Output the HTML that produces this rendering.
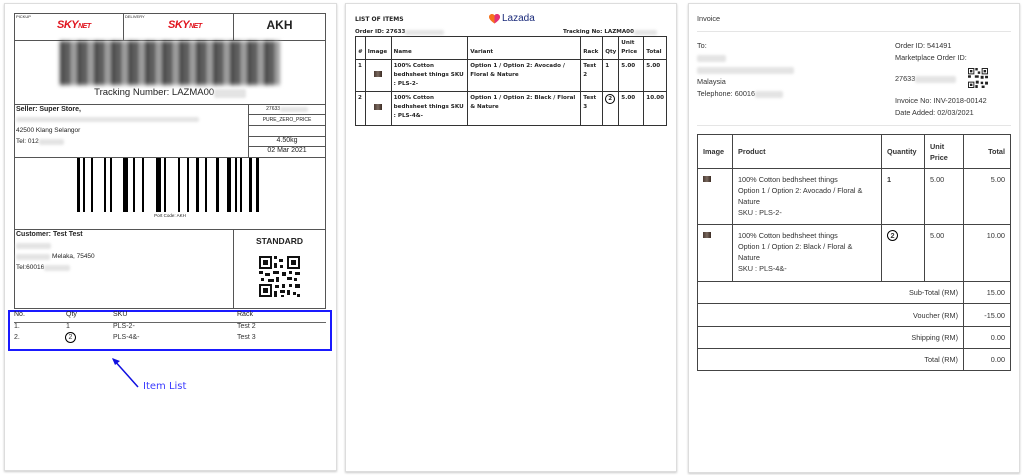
<!DOCTYPE html>
<html><head><meta charset="utf-8"><style>
*{margin:0;padding:0;box-sizing:border-box}
body{width:1024px;height:475px;background:#fff;position:relative;overflow:hidden;font-family:"Liberation Sans",Arial,sans-serif;color:#222}
.a{position:absolute}
.panel{position:absolute;border:1px solid #ddd;box-shadow:0 1px 2px #ccc;background:#fff}
.bx{position:absolute;border:1px solid #555}
.bl{color:transparent;background:#e4e4e4;filter:blur(1.2px);border-radius:2px;display:inline-block;line-height:0.9em}
.t7{font-size:7px}
table{border-collapse:collapse}
#mt td,#mt th{border:1px solid #333;font-size:5.6px;font-family:"DejaVu Sans",sans-serif;font-weight:bold;vertical-align:top;padding:2px;text-align:left;line-height:9px;color:#222}
#mt th{vertical-align:bottom}
#it td,#it th{border:1px solid #444;font-size:7.3px;vertical-align:top;padding:5px;text-align:left;color:#333;line-height:11px;font-weight:normal}
#it th{vertical-align:middle;font-weight:bold}
.thumb{display:inline-block;width:8px;height:6px;background:linear-gradient(90deg,#4a3a32,#7a6a60,#3a2a22)}
.circ{display:inline-block;border:1px solid #000;border-radius:50%;width:11px;height:11px;text-align:center;line-height:10px}
</style></head><body>

<!-- LEFT PANEL -->
<div class="panel" style="left:4px;top:3px;width:333px;height:468px"></div>
<div class="bx" style="left:14px;top:13px;width:312px;height:296px"></div>
<div class="a" style="left:14px;top:40px;width:312px;border-top:1px solid #555"></div>
<div class="a" style="left:123px;top:13px;height:27px;border-left:1px solid #555"></div>
<div class="a" style="left:233px;top:13px;height:27px;border-left:1px solid #555"></div>
<div class="a" style="left:16px;top:14px;font-size:4px">PICKUP</div>
<div class="a" style="left:125px;top:14px;font-size:4px">DELIVERY</div>
<div class="a" style="left:57px;top:19px;color:#e0141e;font-weight:bold;font-style:italic;font-size:11px;letter-spacing:-0.5px">SKY<span style="font-size:7px">NET</span></div>
<div class="a" style="left:168px;top:19px;color:#e0141e;font-weight:bold;font-style:italic;font-size:11px;letter-spacing:-0.5px">SKY<span style="font-size:7px">NET</span></div>
<div class="a" style="left:233px;top:18px;width:93px;text-align:center;font-size:12px;font-weight:bold">AKH</div>
<div class="a" style="left:60px;top:41px;width:220px;height:44px;background:repeating-linear-gradient(90deg,#333 0 5px,#aaa 5px 7px,#222 7px 10px,#ccc 10px 13px,#555 13px 15px,#eee 15px 17px);filter:blur(2px)"></div>
<div class="a" style="left:14px;top:87px;width:312px;text-align:center;font-size:9.5px">Tracking Number: LAZMA00<span class="bl">467752</span></div>
<div class="a" style="left:14px;top:104px;width:312px;border-top:1px solid #555"></div>
<div class="a" style="left:248px;top:104px;height:53px;border-left:1px solid #555"></div>
<div class="a" style="left:248px;top:114px;width:78px;border-top:1px solid #555"></div>
<div class="a" style="left:248px;top:125px;width:78px;border-top:1px solid #555"></div>
<div class="a" style="left:248px;top:136px;width:78px;border-top:1px solid #555"></div>
<div class="a" style="left:248px;top:146px;width:78px;border-top:1px solid #555"></div>
<div class="a" style="left:248px;top:106px;width:78px;text-align:center;font-size:5px">27633<span class="bl">0000000000</span></div>
<div class="a" style="left:248px;top:117px;width:78px;text-align:center;font-size:5px">PURE_ZERO_PRICE</div>
<div class="a" style="left:248px;top:137px;width:78px;text-align:center;font-size:7px">4.50kg</div>
<div class="a" style="left:248px;top:147px;width:78px;text-align:center;font-size:7px">02 Mar 2021</div>
<div class="a t7" style="left:16px;top:106px;font-weight:bold">Seller: Super Store,</div>
<div class="a" style="left:16px;top:116px;font-size:6px"><span class="bl">Kawasan Perusahaan Batu 5, Jalan  Banting, Telok Panglima Garang</span></div>
<div class="a" style="left:16px;top:127px;font-size:6.5px">42500 Klang Selangor</div>
<div class="a" style="left:16px;top:138px;font-size:6.5px">Tel: 012<span class="bl">7335333</span></div>
<div class="a" style="left:14px;top:157px;width:312px;border-top:1px solid #555"></div>
<div class="a" style="left:77px;top:158px;width:186px;height:54px;background:linear-gradient(90deg,#000 0 3px,#fff 3px 6px,#000 6px 8px,#fff 8px 14px,#000 14px 16px,#fff 16px 27px,#000 27px 29px,#fff 29px 33px,#000 33px 35px,#fff 35px 46px,#000 46px 51px,#fff 51px 56px,#000 56px 58px,#fff 58px 65px,#000 65px 67px,#fff 67px 79px,#000 79px 84px,#fff 84px 87px,#000 87px 89px,#fff 89px 101px,#000 101px 103px,#fff 103px 110px,#000 110px 112px,#fff 112px 119px,#000 119px 122px,#fff 122px 128px,#000 128px 130px,#fff 130px 139px,#000 139px 142px,#fff 142px 150px,#000 150px 154px,#fff 154px 158px,#000 158px 160px,#fff 160px 163px,#000 163px 165px,#fff 165px 172px,#000 172px 175px,#fff 175px 179px,#000 179px 182px,#fff 182px 186px)"></div>
<div class="a" style="left:14px;top:213px;width:312px;text-align:center;font-size:4.5px">Port Code: AKH</div>
<div class="a" style="left:14px;top:229px;width:312px;border-top:1px solid #555"></div>
<div class="a" style="left:233px;top:229px;height:80px;border-left:1px solid #555"></div>
<div class="a t7" style="left:16px;top:231px;font-weight:bold">Customer: Test Test</div>
<div class="a" style="left:16px;top:242px;font-size:6.5px"><span class="bl">3, Lorong 5,</span></div>
<div class="a" style="left:16px;top:253px;font-size:6.5px"><span class="bl">Ayer Keroh,</span> Melaka, 75450</div>
<div class="a" style="left:16px;top:264px;font-size:6.5px">Tel:60016<span class="bl">3746369</span></div>
<div class="a" style="left:233px;top:236px;width:93px;text-align:center;font-size:8.5px;font-weight:bold">STANDARD</div>
<svg class="a" style="left:259px;top:256px" width="41" height="41" viewBox="0 0 41 41"><g fill="#111"><path d="M0 0h13v13H0zM2 2v9h9V2zM4 4h5v5H4z" fill-rule="evenodd"/><path d="M28 0h13v13H28zM30 2v9h9V2zM32 4h5v5h-5z" fill-rule="evenodd"/><path d="M0 28h13v13H0zM2 30v9h9v-9zM4 32h5v5H4z" fill-rule="evenodd"/><rect x="15" y="0" width="3" height="3"/><rect x="20" y="3" width="4" height="3"/><rect x="15" y="7" width="3" height="5"/><rect x="21" y="9" width="3" height="3"/><rect x="0" y="15" width="4" height="3"/><rect x="6" y="17" width="5" height="3"/><rect x="14" y="15" width="6" height="3"/><rect x="23" y="16" width="4" height="4"/><rect x="30" y="15" width="3" height="3"/><rect x="36" y="16" width="5" height="3"/><rect x="2" y="22" width="3" height="3"/><rect x="9" y="23" width="6" height="3"/><rect x="17" y="21" width="3" height="5"/><rect x="28" y="21" width="5" height="3"/><rect x="35" y="22" width="3" height="3"/><rect x="16" y="29" width="4" height="3"/><rect x="23" y="28" width="3" height="4"/><rect x="30" y="28" width="3" height="3"/><rect x="36" y="28" width="5" height="4"/><rect x="15" y="35" width="3" height="6"/><rect x="21" y="34" width="5" height="3"/><rect x="28" y="34" width="3" height="5"/><rect x="34" y="36" width="3" height="3"/><rect x="38" y="38" width="3" height="3"/><rect x="22" y="39" width="3" height="2"/></g></svg>
<!-- item list -->
<div class="a" style="left:8px;top:310px;width:324px;height:41px;border:2px solid #1a1aff"></div>
<div class="a" style="left:14px;top:322px;width:312px;border-top:1px solid #666"></div>
<div class="a" style="left:14px;top:311px;font-size:7px">No.</div>
<div class="a" style="left:66px;top:311px;font-size:7px">Qty</div>
<div class="a" style="left:113px;top:311px;font-size:7px">SKU</div>
<div class="a" style="left:237px;top:311px;font-size:7px">Rack</div>
<div class="a" style="left:14px;top:323px;font-size:7px;color:#333">1.</div>
<div class="a" style="left:66px;top:323px;font-size:7px;color:#333">1</div>
<div class="a" style="left:113px;top:323px;font-size:7px;color:#333">PLS-2-</div>
<div class="a" style="left:237px;top:323px;font-size:7px;color:#333">Test 2</div>
<div class="a" style="left:14px;top:334px;font-size:7px;color:#333">2.</div>
<div class="a" style="left:65px;top:332px;font-size:7px;color:#333"><span class="circ">2</span></div>
<div class="a" style="left:113px;top:334px;font-size:7px;color:#333">PLS-4&amp;-</div>
<div class="a" style="left:237px;top:334px;font-size:7px;color:#333">Test 3</div>
<svg class="a" style="left:108px;top:355px" width="35" height="40"><line x1="30" y1="32" x2="5" y2="4" stroke="#1010e0" stroke-width="1.5"/><path d="M4 3l8 3-5 4z" fill="#1010e0"/></svg>
<div class="a" style="left:143px;top:381px;font-size:10px;color:#3a3aff;font-family:'DejaVu Sans',sans-serif">Item List</div>

<!-- MIDDLE PANEL -->
<div class="panel" style="left:345px;top:3px;width:332px;height:469px"></div>
<div class="a" style="left:355px;top:16px;font-size:6px;font-weight:bold;font-family:'DejaVu Sans',sans-serif">LIST OF ITEMS</div>
<svg class="a" style="left:489px;top:14px" width="11" height="10" viewBox="0 0 11 10"><path d="M5.5 9.5C2 7 0 5 0 3 0 1.2 1.4 0 3 0c1.1 0 2 .6 2.5 1.4C6 .6 6.9 0 8 0c1.6 0 3 1.2 3 3 0 2-2 4-5.5 6.5z" fill="#f5731d"/><path d="M5.5 9.5C9 7 11 5 11 3 11 1.2 9.6 0 8 0 6.9 0 6 .6 5.5 1.4z" fill="#e0208f" opacity=".8"/></svg>
<div class="a" style="left:502px;top:13px;font-size:10px;color:#1a2a7a">Lazada</div>
<div class="a" style="left:355px;top:29px;font-size:5.6px;font-weight:bold;font-family:'DejaVu Sans',sans-serif">Order ID: 27633<span class="bl">0000000000</span></div>
<div class="a" style="left:563px;top:29px;font-size:5.6px;font-weight:bold;font-family:'DejaVu Sans',sans-serif">Tracking No: LAZMA00<span class="bl">467752</span></div>
<table id="mt" class="a" style="left:355px;top:36px;width:312px">
<tr style="height:22px"><th style="width:9px">#</th><th style="width:26px">Image</th><th style="width:77px">Name</th><th style="width:114px">Variant</th><th style="width:22px">Rack</th><th style="width:16px">Qty</th><th style="width:25px">Unit Price</th><th>Total</th></tr>
<tr style="height:30px"><td>1</td><td style="vertical-align:middle;text-align:center"><span class="thumb"></span></td><td>100% Cotton bedhsheet things SKU : PLS-2-</td><td>Option 1 / Option 2: Avocado / Floral &amp; Nature</td><td>Test 2</td><td>1</td><td>5.00</td><td>5.00</td></tr>
<tr style="height:34px"><td>2</td><td style="vertical-align:middle;text-align:center"><span class="thumb"></span></td><td>100% Cotton bedhsheet things SKU : PLS-4&amp;-</td><td>Option 1 / Option 2: Black / Floral &amp; Nature</td><td>Test 3</td><td><span class="circ" style="width:10px;height:10px;line-height:9px">2</span></td><td>5.00</td><td>10.00</td></tr>
</table>

<!-- RIGHT PANEL -->
<div class="panel" style="left:688px;top:3px;width:332px;height:470px"></div>
<div class="a" style="left:697px;top:14px;font-size:7.3px;color:#333">Invoice</div>
<div class="a" style="left:697px;top:31px;width:314px;border-top:1px solid #e5e5e5"></div>
<div class="a" style="left:697px;top:40px;font-size:7.3px;color:#333;line-height:12px">To:<br><span class="bl">Test Test</span><br><span class="bl">2, Lorong 5 Ayer Keroh 75450</span><br>Malaysia<br>Telephone: 60016<span class="bl">3746369</span></div>
<div class="a" style="left:895px;top:40px;font-size:7.3px;color:#333;line-height:12px">Order ID: 541491<br>Marketplace Order ID:</div>
<div class="a" style="left:895px;top:74px;font-size:7.3px;color:#333">27633<span class="bl">2001900936</span></div>
<svg class="a" style="left:968px;top:68px" width="20" height="20" viewBox="0 0 41 41"><g fill="#222"><path d="M0 0h13v13H0zM2 2v9h9V2zM4 4h5v5H4z" fill-rule="evenodd"/><path d="M28 0h13v13H28zM30 2v9h9V2zM32 4h5v5h-5z" fill-rule="evenodd"/><path d="M0 28h13v13H0zM2 30v9h9v-9zM4 32h5v5H4z" fill-rule="evenodd"/><rect x="15" y="0" width="5" height="5"/><rect x="20" y="7" width="5" height="5"/><rect x="0" y="15" width="6" height="5"/><rect x="14" y="15" width="8" height="5"/><rect x="26" y="16" width="6" height="6"/><rect x="35" y="16" width="6" height="5"/><rect x="16" y="26" width="6" height="6"/><rect x="26" y="28" width="5" height="5"/><rect x="35" y="28" width="6" height="6"/><rect x="15" y="35" width="5" height="6"/><rect x="28" y="36" width="6" height="5"/></g></svg>
<div class="a" style="left:895px;top:95px;font-size:7.3px;color:#333;line-height:12px">Invoice No: INV-2018-00142<br>Date Added: 02/03/2021</div>
<div class="a" style="left:697px;top:125px;width:314px;border-top:1px solid #e5e5e5"></div>
<table id="it" class="a" style="left:697px;top:134px;width:314px">
<tr style="height:34px"><th style="width:35px">Image</th><th style="width:149px">Product</th><th style="width:43px">Quantity</th><th style="width:39px">Unit Price</th><th style="text-align:right">Total</th></tr>
<tr style="height:56px"><td><span class="thumb"></span></td><td>100% Cotton bedhsheet things<br>Option 1 / Option 2: Avocado / Floral &amp; Nature<br>SKU : PLS-2-</td><td style="font-weight:bold">1</td><td>5.00</td><td style="text-align:right">5.00</td></tr>
<tr style="height:57px"><td><span class="thumb"></span></td><td>100% Cotton bedhsheet things<br>Option 1 / Option 2: Black / Floral &amp; Nature<br>SKU : PLS-4&amp;-</td><td><span class="circ" style="font-weight:bold">2</span></td><td>5.00</td><td style="text-align:right">10.00</td></tr>
<tr style="height:22px"><td colspan="4" style="text-align:right;vertical-align:middle">Sub-Total (RM)</td><td style="text-align:right;vertical-align:middle">15.00</td></tr>
<tr style="height:23px"><td colspan="4" style="text-align:right;vertical-align:middle">Voucher (RM)</td><td style="text-align:right;vertical-align:middle">-15.00</td></tr>
<tr style="height:22px"><td colspan="4" style="text-align:right;vertical-align:middle">Shipping (RM)</td><td style="text-align:right;vertical-align:middle">0.00</td></tr>
<tr style="height:22px"><td colspan="4" style="text-align:right;vertical-align:middle">Total (RM)</td><td style="text-align:right;vertical-align:middle">0.00</td></tr>
</table>
</body></html>
